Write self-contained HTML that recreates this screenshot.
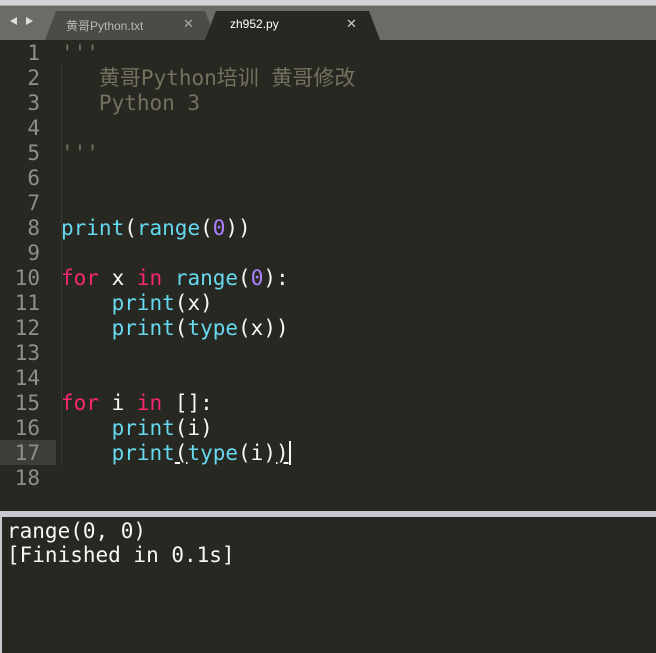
<!DOCTYPE html><html><head><meta charset="utf-8"><style>
body{margin:0;width:656px;height:651px;background:#282823;overflow:hidden;position:relative;font-family:"DejaVu Sans Mono","Liberation Mono","Noto Sans CJK SC",monospace}
.top{position:absolute;left:0;top:0;width:656px;height:5px;background:#d6d3d8;border-bottom:1px solid #a8a8a8}
.bar{position:absolute;left:0;top:6px;width:656px;height:34px;background:#6b6c66}
.tab{position:absolute;top:5px;height:29px;font:12px "Liberation Sans","Noto Sans CJK SC",sans-serif;}
.ed{position:absolute;left:0;top:41px;width:656px}
.ln{height:25px;line-height:25px;font-size:21px;white-space:pre;position:relative}
.n{position:absolute;left:0;width:40px;text-align:right;color:#8f908a}
.c{position:absolute;left:61px;color:#f8f8f2}
.k{color:#f92672}.f{color:#66d9ef}.p{color:#ae81ff}.s{color:#75715e}
.out{position:absolute;left:0;top:511px;width:656px;height:6px;background:#c8c9d0}
.o{position:absolute;top:517px;width:654px;height:134px;border-left:2px solid #c8c9d0;left:0;padding-top:2px}
.o div{font-size:21px;line-height:24px;color:#f8f8f2;white-space:pre;padding-left:5px}
</style></head><body>
<div class="top"></div><div class="bar"></div>
<svg style="position:absolute;left:0;top:6px" width="656" height="34">
<polygon points="10,15 17,11 17,19" fill="#ddd"/><polygon points="26,11 33,15 26,19" fill="#ddd"/>
<polygon points="45,34 56,5 205,5 216,34" fill="#4b4c47"/>
<polygon points="205,34 216,5 369,5 380,34" fill="#282823"/>
</svg>
<div class="tab" style="left:66px;top:17px;color:#b8b8b2">黄哥Python.txt</div>
<div class="tab" style="left:183px;top:16px;color:#aaa;font-size:13px">✕</div>
<div class="tab" style="left:230px;top:17px;color:#fff">zh952.py</div>
<div class="tab" style="left:346px;top:16px;color:#ccc;font-size:13px">✕</div>
<div style="position:absolute;left:61px;top:65px;height:400px;border-left:1px dotted #4a4a44"></div>
<div style="position:absolute;left:0;top:440px;width:56px;height:25px;background:#3e3d37"></div>
<div class="ed">
<div class="ln"><span class="n">1</span><span class="c s">'''</span></div>
<div class="ln"><span class="n">2</span><span class="c s">   黄哥Python培训 黄哥修改</span></div>
<div class="ln"><span class="n">3</span><span class="c s">   Python 3</span></div>
<div class="ln"><span class="n">4</span></div>
<div class="ln"><span class="n">5</span><span class="c s">'''</span></div>
<div class="ln"><span class="n">6</span></div>
<div class="ln"><span class="n">7</span></div>
<div class="ln"><span class="n">8</span><span class="c"><span class="f">print</span>(<span class="f">range</span>(<span class="p">0</span>))</span></div>
<div class="ln"><span class="n">9</span></div>
<div class="ln"><span class="n">10</span><span class="c"><span class="k">for</span> x <span class="k">in</span> <span class="f">range</span>(<span class="p">0</span>):</span></div>
<div class="ln"><span class="n">11</span><span class="c">    <span class="f">print</span>(x)</span></div>
<div class="ln"><span class="n">12</span><span class="c">    <span class="f">print</span>(<span class="f">type</span>(x))</span></div>
<div class="ln"><span class="n">13</span></div>
<div class="ln"><span class="n">14</span></div>
<div class="ln"><span class="n">15</span><span class="c"><span class="k">for</span> i <span class="k">in</span> []:</span></div>
<div class="ln"><span class="n">16</span><span class="c">    <span class="f">print</span>(i)</span></div>
<div class="ln"><span class="n">17</span><span class="c">    <span class="f">print</span><span style="text-decoration:underline">(</span><span class="f">type</span>(i)<span style="text-decoration:underline">)</span><span style="border-left:2px solid #f8f8f2"></span></span></div>
<div class="ln"><span class="n">18</span></div>
</div>
<div class="out"></div>
<div class="o"><div>range(0, 0)</div><div>[Finished in 0.1s]</div></div>
</body></html>
